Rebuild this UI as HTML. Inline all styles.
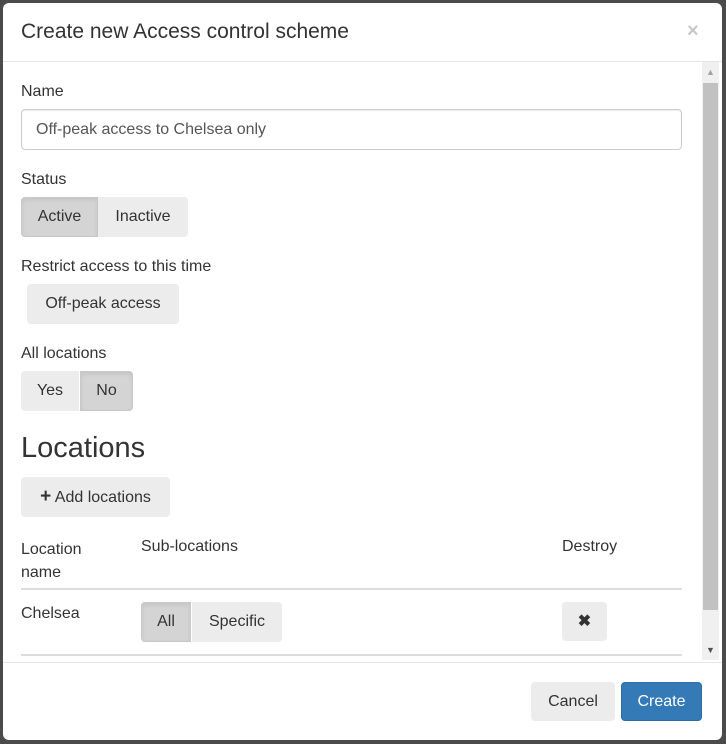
<!DOCTYPE html>
<html><head><style>
*{box-sizing:border-box;margin:0;padding:0}
body{width:726px;height:744px;background:#4b4b4b;font-family:"Liberation Sans",sans-serif;color:#333;font-size:16px;position:relative;overflow:hidden}
.m{position:absolute;left:3px;top:3px;width:719px;height:737px;background:#fff;border-radius:6px;overflow:hidden}
.a{position:absolute;white-space:nowrap}
.btn{position:absolute;height:40px;line-height:40px;text-align:center;background:#ececec;color:#333;font-size:16px;border-radius:4px}
.on{background:#d4d4d4;box-shadow:inset 0 2px 4px rgba(0,0,0,.08);border:1px solid #c8c8c8;line-height:38px}
.hr{position:absolute;height:2px;background:#ddd}
</style></head><body>
<div class="m">
<div class="a" style="left:18px;top:17px;font-size:21px">Create new Access control scheme</div>
<div class="a" style="left:684px;top:17px;font-size:20px;color:#c8c8c8;font-weight:bold">×</div>
<div style="position:absolute;left:0;top:58px;width:719px;height:1px;background:#e5e5e5"></div>
<div style="position:absolute;left:699px;top:59px;width:17px;height:598px;background:#f0f0f0"></div>
<div style="position:absolute;left:700px;top:80px;width:15px;height:527px;background:#c1c1c1"></div>
<div class="a" style="left:703px;top:64px;font-size:9px;color:#a3a3a3">▲</div>
<div class="a" style="left:703px;top:642px;font-size:9px;color:#505050">▼</div>
<div class="a" style="left:18px;top:80px">Name</div>
<div style="position:absolute;left:18px;top:106px;width:661px;height:41px;border:1px solid #ccc;border-radius:4px;box-shadow:inset 0 1px 1px rgba(0,0,0,.075)"></div>
<div class="a" style="left:33px;top:118px;font-size:16px;color:#555">Off-peak access to Chelsea only</div>
<div class="a" style="left:18px;top:168px">Status</div>
<div class="btn on" style="left:18px;top:194px;width:77px;border-radius:4px 0 0 4px">Active</div>
<div class="btn" style="left:95px;top:194px;width:90px;border-radius:0 4px 4px 0">Inactive</div>
<div class="a" style="left:18px;top:255px">Restrict access to this time</div>
<div class="btn" style="left:24px;top:281px;width:152px">Off-peak access</div>
<div class="a" style="left:18px;top:342px">All locations</div>
<div class="btn" style="left:18px;top:368px;width:58px;border-radius:4px 0 0 4px">Yes</div>
<div class="btn on" style="left:77px;top:368px;width:53px;border-radius:0 4px 4px 0">No</div>
<div class="a" style="left:18px;top:429px;font-size:29px">Locations</div>
<div class="btn" style="left:18px;top:474px;width:149px"><b style="font-size:19px">+</b> Add locations</div>
<div class="a" style="left:18px;top:535px;line-height:23px">Location<br>name</div>
<div class="a" style="left:138px;top:535px">Sub-locations</div>
<div class="a" style="left:559px;top:535px">Destroy</div>
<div class="hr" style="left:18px;top:585px;width:661px"></div>
<div class="a" style="left:18px;top:602px">Chelsea</div>
<div class="btn on" style="left:138px;top:599px;width:50px;border-radius:4px 0 0 4px">All</div>
<div class="btn" style="left:189px;top:599px;width:90px;border-radius:0 4px 4px 0">Specific</div>
<div class="btn" style="left:559px;top:599px;width:45px;height:39px;line-height:39px;font-weight:bold">✖</div>
<div class="hr" style="left:18px;top:651px;width:661px"></div>
<div style="position:absolute;left:0;top:659px;width:719px;height:1px;background:#e5e5e5"></div>
<div class="btn" style="left:528px;top:679px;width:84px;height:39px;line-height:39px">Cancel</div>
<div class="btn" style="left:618px;top:679px;width:81px;height:39px;background:#337ab7;color:#fff;border:1px solid #2e6da4;line-height:37px">Create</div>
</div>
</body></html>
